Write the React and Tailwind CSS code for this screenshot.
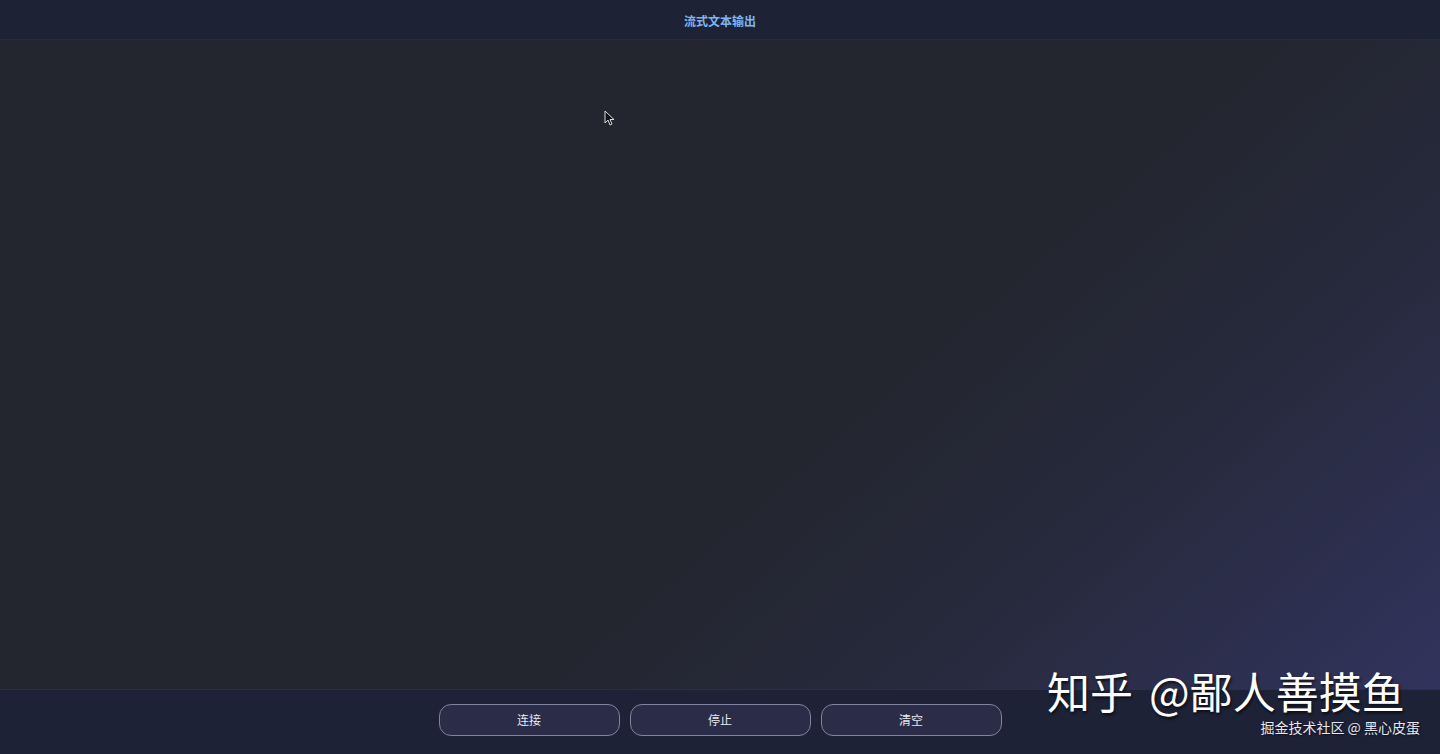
import React from "react";

export default function App() {
  const font = { fontFamily: '"Noto Sans CJK SC", "Noto Sans", sans-serif' };
  return (
    <div className="relative flex h-[754px] w-[1440px] flex-col overflow-hidden bg-[#23252f]" style={font}>
      <header className="flex h-[40px] shrink-0 items-center justify-center border-b border-[#272a3d] bg-[#1e2235] pt-[3px]">
        <h1 className="text-[12px] font-bold text-[#7fb6ee]">流式文本输出</h1>
      </header>
      <main className="flex-1 bg-[linear-gradient(139deg,#23252f_0%,#23252f_58%,#272a3c_75%,#31335d_100%)]" />
      <footer className="flex h-[65px] shrink-0 items-start justify-center gap-[10px] border-t border-[#2c2f48] bg-[#1e2237] pt-[14px]">
        {["连接", "停止", "清空"].map((t) => (
          <button
            key={t}
            className="h-[32px] w-[181px] rounded-[12px] border border-[#80839f] bg-[#2b2d48] text-[12px] text-[#e8e8f0]"
          >
            {t}
          </button>
        ))}
      </footer>

      {/* watermark */}
      <div className="absolute left-[1047px] top-[667px] whitespace-nowrap text-[43px] leading-[46px] text-white [text-shadow:1px_2px_3px_rgba(0,0,0,0.7)]">
        知乎<span className="ml-[16px]">@鄙人善摸鱼</span>
      </div>
      <div className="absolute right-[20px] top-[720px] whitespace-nowrap text-[14px] leading-[14px] text-[#e6e6ee] [text-shadow:1px_1px_2px_rgba(0,0,0,0.6)]">
        掘金技术社区 @ 黑心皮蛋
      </div>

      {/* mouse cursor */}
      <svg className="absolute left-[604px] top-[110px]" width="11" height="16" viewBox="0 0 11 16">
        <path d="M1 1 L1 13 L4 10 L6 15 L8 14 L6 9.5 L10 9.5 Z" fill="#111" stroke="#ddd" strokeWidth="1" />
      </svg>
    </div>
  );
}
